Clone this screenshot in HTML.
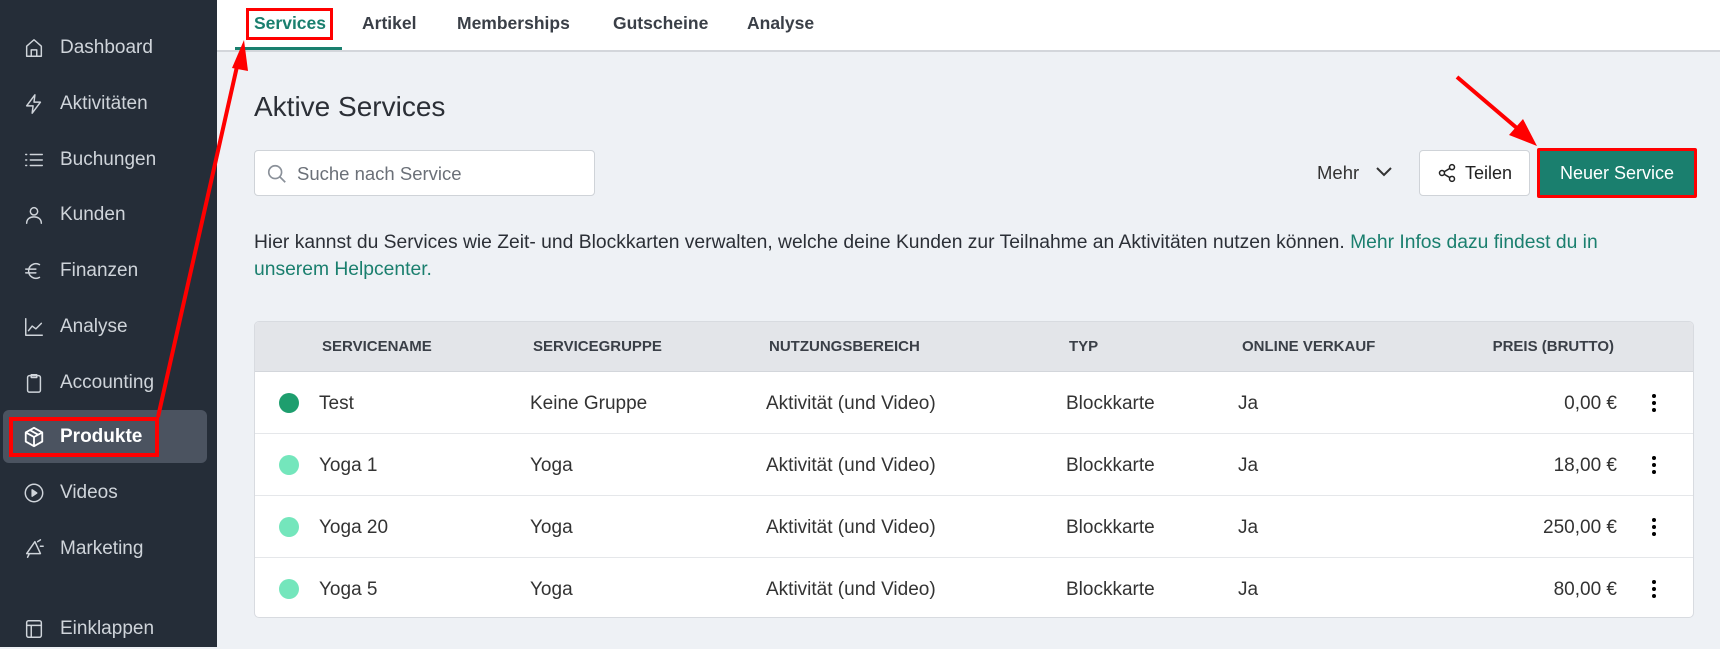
<!DOCTYPE html>
<html><head><meta charset="utf-8"><style>
*{box-sizing:border-box;margin:0;padding:0}
body{width:1720px;height:647px;overflow:hidden;background:#eef1f5;font-family:"Liberation Sans",sans-serif;position:relative;color:#2b2f36}
.sb{position:absolute;left:0;top:0;width:217px;height:647px;background:#252d38}
.it{position:absolute;left:0;width:217px;height:40px;display:flex;align-items:center;color:#cfd4da;font-size:19px}
.it svg{position:absolute;left:23px;width:22px;height:22px;fill:none;stroke:#cfd4da;stroke-width:1.6;stroke-linecap:round;stroke-linejoin:round}
.it span{position:absolute;left:60px}
.act{position:absolute;left:3px;top:410px;width:204px;height:53px;background:#4b5360;border-radius:6px}
.top{position:absolute;left:217px;top:0;right:0;height:52px;background:#fff;border-bottom:2px solid #d3d6db}
.tab{position:absolute;top:13px;font-size:17.5px;font-weight:bold;color:#3a3f47}
.c{position:absolute}
.btn{position:absolute;top:150px;height:46px;border-radius:4px;display:flex;align-items:center;justify-content:center;font-size:18px}
.tbl{position:absolute;left:254px;top:321px;width:1440px;height:297px;background:#fff;border:1px solid #d8dbe0;border-radius:5px;overflow:hidden}
.hd{position:absolute;left:0;top:0;width:100%;height:50px;background:#e3e5e9;border-bottom:1px solid #d3d6db}
.h{position:absolute;top:16px;font-size:15px;font-weight:bold;color:#3a3f47}
.row{position:absolute;left:0;width:100%;height:62px;border-bottom:1px solid #e5e7ea}
.row div{position:absolute;top:21px;font-size:19px;color:#333}
.dot{width:20px;height:20px;border-radius:50%;top:21px!important}
.keb{position:absolute;width:4px;height:18px;top:22px}
</style></head><body>
<div class="sb">
<div class="act"></div>
<div class="it" style="top:28px"><svg viewBox="0 0 24 24"><path d="M4 10 12 3l8 7v11H4z M9 21v-7h6v7"/></svg><span>Dashboard</span></div>
<div class="it" style="top:84px"><svg viewBox="0 0 24 24"><path d="M13 2 4 14h7l-1 8 9-12h-7z"/></svg><span>Aktivitäten</span></div>
<div class="it" style="top:140px"><svg viewBox="0 0 24 24"><path d="M8 6h13M8 12h13M8 18h13M3 6h1M3 12h1M3 18h1"/></svg><span>Buchungen</span></div>
<div class="it" style="top:195px"><svg viewBox="0 0 24 24"><circle cx="12" cy="8" r="4"/><path d="M4 21c0-5 4-7 8-7s8 2 8 7"/></svg><span>Kunden</span></div>
<div class="it" style="top:251px"><svg viewBox="0 0 24 24"><path d="M18 5a8 8 0 1 0 0 14M3 10h11M3 14h11"/></svg><span>Finanzen</span></div>
<div class="it" style="top:307px"><svg viewBox="0 0 24 24"><path d="M3 3v18h18M6 16l4-5 4 3 6-6"/></svg><span>Analyse</span></div>
<div class="it" style="top:363px"><svg viewBox="0 0 24 24"><rect x="5" y="4" width="14" height="18" rx="2"/><path d="M9 3h6v3H9z"/></svg><span>Accounting</span></div>
<div class="it" style="top:417px;color:#fff;font-weight:bold"><svg viewBox="0 0 24 24" style="stroke:#fff;stroke-width:2"><path d="M12 2 3 7v10l9 5 9-5V7zM3 7l9 5 9-5M12 12v10M7.5 4.5l9 5"/></svg><span>Produkte</span></div>
<div class="it" style="top:473px"><svg viewBox="0 0 24 24"><circle cx="12" cy="12" r="9.5"/><path d="M10 8.5v7l5-3.5z" fill="#cfd4da"/></svg><span>Videos</span></div>
<div class="it" style="top:529px"><svg viewBox="0 0 24 24"><path d="M4 17 13 4l6 13zM7 17l-2 4M16 4l3-2M19 9h3"/></svg><span>Marketing</span></div>
<div class="it" style="top:609px"><svg viewBox="0 0 24 24"><rect x="4" y="3" width="16" height="18" rx="2"/><path d="M4 8h16M9 8v13"/></svg><span>Einklappen</span></div>
</div>
<div class="top">
<div class="tab" style="left:37px;color:#1a7f6e">Services</div>
<div style="position:absolute;left:18px;top:47px;width:107px;height:3px;background:#1a7f6e"></div>
<div class="tab" style="left:145px">Artikel</div>
<div class="tab" style="left:240px">Memberships</div>
<div class="tab" style="left:396px">Gutscheine</div>
<div class="tab" style="left:530px">Analyse</div>
</div>
<div class="c" style="left:246px;top:8px;width:87px;height:32px;border:3px solid #f00"></div>
<div class="c" style="left:254px;top:91px;font-size:28px;color:#2b2f36">Aktive Services</div>
<div class="c" style="left:254px;top:150px;width:341px;height:46px;background:#fff;border:1px solid #cfd3d8;border-radius:4px">
<svg style="position:absolute;left:11px;top:12px" width="22" height="22" viewBox="0 0 24 24" fill="none" stroke="#8a9099" stroke-width="1.8"><circle cx="10" cy="10" r="7"/><path d="m15 15 6 6"/></svg>
<div style="position:absolute;left:42px;top:12px;font-size:18.5px;color:#6b7078">Suche nach Service</div></div>
<div class="c" style="left:1317px;top:162px;font-size:18.5px;color:#333">Mehr</div>
<svg class="c" style="left:1375px;top:165px" width="18" height="14" viewBox="0 0 18 14" fill="none" stroke="#333" stroke-width="2"><path d="m2 3 7 7 7-7"/></svg>
<div class="btn" style="left:1419px;width:111px;background:#fff;border:1px solid #cfd3d8;color:#222">
<svg width="20" height="20" viewBox="0 0 24 24" fill="none" stroke="#222" stroke-width="1.8" style="margin-right:8px"><circle cx="18" cy="5" r="3"/><circle cx="6" cy="12" r="3"/><circle cx="18" cy="19" r="3"/><path d="m8.6 13.5 6.8 4M15.4 6.5l-6.8 4"/></svg>Teilen</div>
<div class="btn" style="left:1537px;width:160px;height:50px;top:148px;background:#1a7f6e;color:#fff;border:3px solid #f00;border-radius:2px">Neuer Service</div>
<div class="c" style="left:254px;top:229px;width:1380px;font-size:19.3px;line-height:27px;color:#2b2f36">Hier kannst du Services wie Zeit- und Blockkarten verwalten, welche deine Kunden zur Teilnahme an Aktivitäten nutzen können. <span style="color:#1a7f6e">Mehr Infos dazu findest du in unserem Helpcenter.</span></div>
<div class="tbl">
<div class="hd">
<div class="h" style="left:67px">SERVICENAME</div>
<div class="h" style="left:278px">SERVICEGRUPPE</div>
<div class="h" style="left:514px">NUTZUNGSBEREICH</div>
<div class="h" style="left:814px">TYP</div>
<div class="h" style="left:987px">ONLINE VERKAUF</div>
<div class="h" style="right:79px">PREIS (BRUTTO)</div>
</div>
<div class="row" style="top:50px"><div class="dot" style="left:24px;background:#1e9e6e"></div><div style="left:64px">Test</div><div style="left:275px">Keine Gruppe</div><div style="left:511px">Aktivität (und Video)</div><div style="left:811px">Blockkarte</div><div style="left:983px">Ja</div><div style="right:76px">0,00 €</div><svg class="keb" style="left:1397px" viewBox="0 0 4 18"><circle cx="2" cy="2" r="2"/><circle cx="2" cy="9" r="2"/><circle cx="2" cy="16" r="2"/></svg></div>
<div class="row" style="top:112px"><div class="dot" style="left:24px;background:#74e6bc"></div><div style="left:64px">Yoga 1</div><div style="left:275px">Yoga</div><div style="left:511px">Aktivität (und Video)</div><div style="left:811px">Blockkarte</div><div style="left:983px">Ja</div><div style="right:76px">18,00 €</div><svg class="keb" style="left:1397px" viewBox="0 0 4 18"><circle cx="2" cy="2" r="2"/><circle cx="2" cy="9" r="2"/><circle cx="2" cy="16" r="2"/></svg></div>
<div class="row" style="top:174px"><div class="dot" style="left:24px;background:#74e6bc"></div><div style="left:64px">Yoga 20</div><div style="left:275px">Yoga</div><div style="left:511px">Aktivität (und Video)</div><div style="left:811px">Blockkarte</div><div style="left:983px">Ja</div><div style="right:76px">250,00 €</div><svg class="keb" style="left:1397px" viewBox="0 0 4 18"><circle cx="2" cy="2" r="2"/><circle cx="2" cy="9" r="2"/><circle cx="2" cy="16" r="2"/></svg></div>
<div class="row" style="top:236px;border:none"><div class="dot" style="left:24px;background:#74e6bc"></div><div style="left:64px">Yoga 5</div><div style="left:275px">Yoga</div><div style="left:511px">Aktivität (und Video)</div><div style="left:811px">Blockkarte</div><div style="left:983px">Ja</div><div style="right:76px">80,00 €</div><svg class="keb" style="left:1397px" viewBox="0 0 4 18"><circle cx="2" cy="2" r="2"/><circle cx="2" cy="9" r="2"/><circle cx="2" cy="16" r="2"/></svg></div>
</div>
<div class="c" style="left:9px;top:417px;width:150px;height:40px;border:4px solid #f00"></div>
<svg class="c" style="left:0;top:0" width="1720" height="647" viewBox="0 0 1720 647">
<path d="M158 417 238 62" stroke="#f00" stroke-width="4" fill="none"/>
<path d="M244 40 232 68 248 71z" fill="#f00"/>
<path d="M1457 77 1518 129" stroke="#f00" stroke-width="4" fill="none"/>
<path d="M1537 146 1509 135 1523 119z" fill="#f00"/>
</svg>
</body></html>
